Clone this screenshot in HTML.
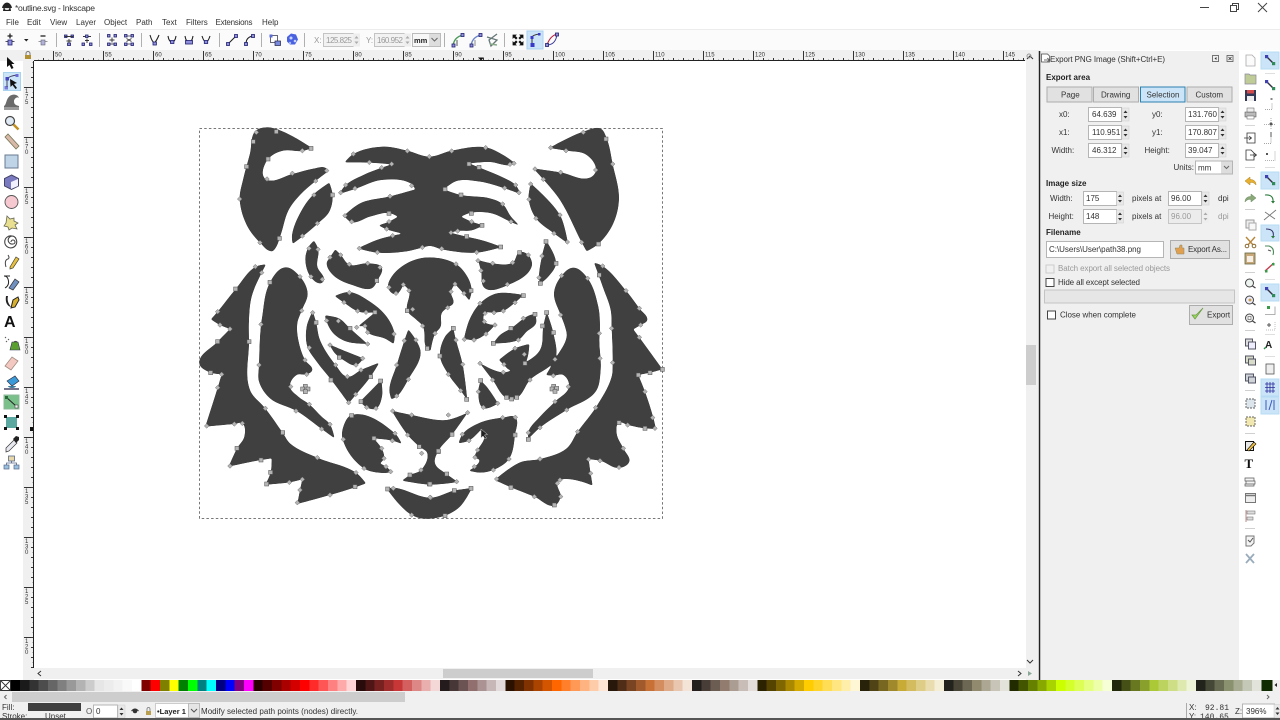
<!DOCTYPE html>
<html><head><meta charset="utf-8"><title>outline.svg - Inkscape</title>
<style>
html,body{margin:0;padding:0;background:#fff;width:1280px;height:720px;overflow:hidden}
svg{position:absolute;left:0;top:0;display:block;filter:blur(.3px)}
text{font-family:"Liberation Sans",sans-serif;font-size:8px;fill:#333}
.b{font-weight:bold;fill:#222}
.g{fill:#999}
.m{font-family:"Liberation Mono",monospace;font-size:8px}
.r{font-size:6px;fill:#333}
.mk{fill:none;stroke:none}
.d{marker:url(#d)}
.s{marker:url(#s)}
.i{fill:#fff;stroke:#b5b5b5;stroke-width:1}
.btn{fill:#e1e1e1;stroke:#adadad;stroke-width:1}
.n{fill:#8f8fdc;stroke:#1f1f70;stroke-width:.8}
.l{fill:none;stroke:#222;stroke-width:1.1}
.sep{stroke:#b0b0b0;stroke-width:1}
</style></head><body>
<svg width="1280" height="720" viewBox="0 0 1280 720" xmlns="http://www.w3.org/2000/svg">
<defs>
<marker id="d" markerUnits="userSpaceOnUse" markerWidth="18" markerHeight="18" refX="9" refY="9" overflow="visible"><path d="M9 2l7 7-7 7-7-7z" fill="#b4b4b4" stroke="#707070" stroke-width="1.5"/></marker>
<marker id="s" markerUnits="userSpaceOnUse" markerWidth="18" markerHeight="18" refX="9" refY="9" overflow="visible"><path d="M3 3h12v12H3z" fill="#b4b4b4" stroke="#505050" stroke-width="1.6"/></marker>
<filter id="goo" filterUnits="userSpaceOnUse" x="-20" y="-20" width="1500" height="1300"><feGaussianBlur stdDeviation="2"/><feComponentTransfer><feFuncA type="linear" slope="5" intercept="-2"/></feComponentTransfer></filter>
<pattern id="hr" x="3" y="50" width="50" height="11" patternUnits="userSpaceOnUse"><path d="M.5 1v10M10.5 8v3M20.5 8v3M30.5 8v3M40.5 8v3" stroke="#333" stroke-width="1"/><path d="M5.5 9.5v2M15.5 9.5v2M25.5 9.5v2M35.5 9.5v2M45.5 9.5v2" stroke="#666" stroke-width=".8"/></pattern>
<pattern id="vr" x="23" y="37" width="11" height="50" patternUnits="userSpaceOnUse"><path d="M1 .5h10M8 10.5h3M8 20.5h3M8 30.5h3M8 40.5h3" stroke="#333" stroke-width="1"/><path d="M9.5 5.5h2M9.5 15.5h2M9.5 25.5h2M9.5 35.5h2M9.5 45.5h2" stroke="#666" stroke-width=".8"/></pattern>
<g id="sp"><rect width="7" height="13" fill="#e8e8e8" stroke="#ccc" stroke-width=".5"/><path d="M3.5 2.5l2 2.5h-4zM3.5 10.5l2-2.5h-4z" fill="#333"/></g>
<g id="spg"><rect width="7" height="13" fill="#eee"/><path d="M3.5 2.5l2 2.5h-4zM3.5 10.5l2-2.5h-4z" fill="#aaa"/></g>
<g id="snap"><path d="M-3-3 3 3" stroke="#334" stroke-width="1.400"/><rect x="-5" y="-5" width="3.200" height="3.200" fill="#4040b0"/><rect x="2" y="2" width="3.200" height="3.200" fill="#308a5a"/></g>
</defs>

<!-- window -->
<rect width="1280" height="720" fill="#fff"/>
<rect y="29" width="1280" height="21" fill="#fbfbfb"/>
<path d="M0 29.5h1280" stroke="#ececec"/>

<!-- title bar -->
<path d="M2 8Q3 3 7 2.500 11 3 12 8L10.500 8 11 11H3L3.500 8z" fill="#222"/><path d="M4.500 8h5l-1 2h-3z" fill="#ddd"/>
<text x="15" y="11" style="font-size:8.600px" textLength="80">*outline.svg - Inkscape</text>
<path d="M1200 7.500h9" stroke="#444" stroke-width="1"/>
<path d="M1230.500 5.500h6v6h-6zM1232.500 5.500v-2h6v6h-2" fill="none" stroke="#444" stroke-width="1"/>
<path d="M1258 3l9 9M1267 3l-9 9" stroke="#444" stroke-width="1"/>

<!-- menu -->
<g>
<text x="6" y="25">File</text><text x="27" y="25">Edit</text><text x="50" y="25">View</text><text x="76" y="25">Layer</text><text x="104" y="25">Object</text><text x="136" y="25">Path</text><text x="162" y="25">Text</text><text x="186" y="25">Filters</text><text x="215.500" y="25" textLength="37">Extensions</text><text x="262" y="25">Help</text>
</g>

<!-- top toolbar -->
<g>
<path d="M10 33.500v5M7.500 36h5" stroke="#222" stroke-width="1.300"/><path d="M5.500 41.500h9" stroke="#555"/><rect x="8" y="40" width="4" height="5" class="n"/>
<path d="M24 39h4.500l-2.200 2.500z" fill="#222"/>
<path d="M40.500 36h5" stroke="#222" stroke-width="1.300"/><path d="M38.500 41.500h9" stroke="#999"/><rect x="41" y="40" width="4" height="5" fill="#b0b0d8" stroke="#667" stroke-width=".6"/>
<path class="sep" d="M56.500 33v14"/>
<rect x="64.500" y="35" width="2.500" height="2.500" class="n"/><rect x="71" y="35" width="2.500" height="2.500" class="n"/><path d="M65 36.500h8M69 39v4M66.500 41h5" stroke="#333" stroke-width=".9"/><rect x="67.500" y="43" width="3" height="2.500" class="n"/>
<path d="M83 36.500h8M87 38.500v4.500M85 40.500h4" stroke="#333" stroke-width=".9"/><rect x="85.500" y="35" width="2.500" height="2.500" class="n"/><rect x="82" y="43" width="2.500" height="2.500" class="n"/><rect x="89.500" y="43" width="2.500" height="2.500" class="n"/>
<path class="sep" d="M99.500 33v14"/>
<rect x="107.500" y="34.500" width="2.500" height="2.500" class="n"/><rect x="114" y="34.500" width="2.500" height="2.500" class="n"/><path d="M112 37.500v5M109.500 40h5" stroke="#333" stroke-width=".9"/><path d="M108 44h8" stroke="#333" stroke-width=".9"/><rect x="107.500" y="43" width="2.500" height="2.500" class="n"/><rect x="114" y="43" width="2.500" height="2.500" class="n"/>
<rect x="124.500" y="34.500" width="2.500" height="2.500" class="n"/><rect x="131" y="34.500" width="2.500" height="2.500" class="n"/><path d="M127 36h4M127 44h4M126.500 38.500l5 3M131.500 38.500l-5 3" stroke="#333" stroke-width=".8"/><rect x="124.500" y="43" width="2.500" height="2.500" class="n"/><rect x="131" y="43" width="2.500" height="2.500" class="n"/>
<path class="sep" d="M141.500 33v14"/>
<path d="M150 35Q152 42 154.500 43 157 40 159 35" class="l" stroke-width=".9"/><rect x="153" y="42" width="3.400" height="3" class="n"/>
<path d="M168 36Q169 42 172 42 175 42 176 36" class="l" stroke-width=".9"/><rect x="170.500" y="40.500" width="3.400" height="3" class="n"/>
<path d="M185 36Q186 42 189 42 192 42 193 36" class="l" stroke-width=".9"/><rect x="185.500" y="40.500" width="7" height="3.500" class="n"/>
<path d="M202 36Q204 42 206 42 208 42 210 36" class="l" stroke-width=".9"/><rect x="204.300" y="40.500" width="3.400" height="3" class="n"/>
<path class="sep" d="M219.500 33v14"/>
<path d="M228 44 236 36" stroke="#222" stroke-width="1.100"/><rect x="226.500" y="42.500" width="3" height="3" class="n"/><rect x="234.500" y="34.500" width="3" height="3" class="n"/>
<path d="M246 44Q246 37 253 36" class="l"/><rect x="244.500" y="42.500" width="3" height="3" class="n"/><rect x="251.500" y="34.500" width="3" height="3" class="n"/>
<path class="sep" d="M261.500 33v14"/>
<rect x="270.500" y="35.500" width="7" height="7" fill="#fff" stroke="#667"/><rect x="269.500" y="34.500" width="3" height="3" fill="#5a6ad8"/><rect x="275" y="41" width="5.500" height="4.500" fill="#7a8ae0" stroke="#224" stroke-width=".7"/>
<path d="M287 37l4-3.500 5 1 2 5-3 5-5 0-3-3z" fill="#4a62e0"/><circle cx="291" cy="38" r="1.500" fill="#c8d4ff"/><circle cx="295" cy="41" r="1.300" fill="#c8d4ff"/><circle cx="290" cy="43" r="1.200" fill="#a8b8ff"/>
<path class="sep" d="M304.500 33v14"/>
<text x="314" y="43" class="g">X:</text>
<rect x="323.500" y="33.500" width="30" height="13" fill="#f2f2f2" stroke="#c4c4c4"/><text x="326" y="43" class="g" textLength="26">125.825</text><use href="#spg" x="353" y="33.500"/>
<text x="366" y="43" class="g">Y:</text>
<rect x="374.500" y="33.500" width="30" height="13" fill="#f2f2f2" stroke="#c4c4c4"/><text x="377" y="43" class="g" textLength="26">160.952</text><use href="#spg" x="404" y="33.500"/>
<rect x="412.500" y="33.500" width="28" height="13" fill="#f7f7f7" stroke="#bbb"/><rect x="429" y="34" width="11" height="12" fill="#ddd"/><path d="M431.500 38l3 3 3-3" fill="none" stroke="#666"/><text x="414" y="43" class="b" style="font-size:7.500px">mm</text>
<path class="sep" d="M444.500 33v14"/>
<path d="M453 46Q454 37 463 35" fill="none" stroke="#4a9a58" stroke-width="1.400"/><path d="M457 46v-6" stroke="#555"/><rect x="452" y="44" width="3" height="3" class="n"/><rect x="461" y="33.500" width="3" height="3" class="n"/>
<path d="M471 46Q472 37 481 35" fill="none" stroke="#6a86c8" stroke-width="1.400"/><path d="M475 46v-6" stroke="#888"/><rect x="470" y="44" width="3" height="3" class="n"/><rect x="479" y="33.500" width="3" height="3" class="n"/>
<path d="M487 37l10 3-6 6-2-6 8-6" fill="none" stroke="#677" stroke-width="1.300"/><path d="M490 44l7 1" stroke="#8a8" stroke-width="1.500"/>
<path class="sep" d="M504.500 33v14"/>
<path d="M513 35h3l-1 1 2 2-1 1-2-2-1 1zM523 35h-3l1 1-2 2 1 1 2-2 1 1zM513 45h3l-1-1 2-2-1-1-2 2-1-1zM523 45h-3l1-1-2-2 1-1 2 2 1-1z" fill="#111" stroke="#111" stroke-width=".8"/>
<rect x="527" y="31" width="16" height="18" fill="#cce4f7" stroke="#a9d2ef"/>
<path d="M532 43V37Q533 35 539 34" fill="none" stroke="#333"/><rect x="530.500" y="36" width="3" height="3" fill="#3a3ac8"/><rect x="530.500" y="43" width="4" height="4" fill="#3a3ac8"/><rect x="538" y="33" width="2.500" height="2.500" fill="#3a3ac8"/>
<path d="M547 45Q550 36 557 34" fill="none" stroke="#c02040" stroke-width="1.100"/><path d="M548 45Q556 44 557 34" fill="none" stroke="#3a3a9a" stroke-width="1"/><rect x="545.500" y="43.500" width="3" height="3" class="n"/><rect x="555.500" y="33" width="3" height="3" class="n"/>
</g>

<!-- rulers -->
<rect x="0" y="50" width="1040" height="11" fill="#f0f0f0"/>
<rect x="23" y="50" width="11" height="630" fill="#f0f0f0"/>
<rect x="34" y="50" width="990" height="11" fill="url(#hr)"/>
<rect x="23" y="62" width="11" height="606" fill="url(#vr)"/>
<path d="M34 60.500h991" stroke="#222" stroke-width="1"/>
<path d="M33.500 61v607" stroke="#222" stroke-width="1"/>
<path d="M26 55v-1.500a2 2 0 0 1 4 0V55" fill="none" stroke="#777"/><rect x="25" y="55" width="6" height="4" fill="#b09030"/>
<g class="r">
<text x="55" y="56.500" class="r">50</text><text x="105" y="56.500" class="r">55</text><text x="155" y="56.500" class="r">60</text><text x="205" y="56.500" class="r">65</text><text x="255" y="56.500" class="r">70</text><text x="305" y="56.500" class="r">75</text><text x="355" y="56.500" class="r">80</text><text x="405" y="56.500" class="r">85</text><text x="455" y="56.500" class="r">90</text><text x="505" y="56.500" class="r">95</text><text x="555" y="56.500" class="r">100</text><text x="605" y="56.500" class="r">105</text><text x="655" y="56.500" class="r">110</text><text x="705" y="56.500" class="r">115</text><text x="755" y="56.500" class="r">120</text><text x="805" y="56.500" class="r">125</text><text x="855" y="56.500" class="r">130</text><text x="905" y="56.500" class="r">135</text><text x="955" y="56.500" class="r">140</text><text x="1005" y="56.500" class="r">145</text>
</g>
<path d="M478 57.500h6l-3 3z" fill="#111"/>
<g>
<text x="25" y="93" class="r">1</text><text x="25" y="98.500" class="r">7</text><text x="25" y="104" class="r">5</text>
<text x="25" y="143" class="r">1</text><text x="25" y="148.500" class="r">7</text><text x="25" y="154" class="r">0</text>
<text x="25" y="193" class="r">1</text><text x="25" y="198.500" class="r">6</text><text x="25" y="204" class="r">5</text>
<text x="25" y="243" class="r">1</text><text x="25" y="248.500" class="r">6</text><text x="25" y="254" class="r">0</text>
<text x="25" y="293" class="r">1</text><text x="25" y="298.500" class="r">5</text><text x="25" y="304" class="r">5</text>
<text x="25" y="343" class="r">1</text><text x="25" y="348.500" class="r">5</text><text x="25" y="354" class="r">0</text>
<text x="25" y="393" class="r">1</text><text x="25" y="398.500" class="r">4</text><text x="25" y="404" class="r">5</text>
<text x="25" y="443" class="r">1</text><text x="25" y="448.500" class="r">4</text><text x="25" y="454" class="r">0</text>
<text x="25" y="493" class="r">1</text><text x="25" y="498.500" class="r">3</text><text x="25" y="504" class="r">5</text>
<text x="25" y="543" class="r">1</text><text x="25" y="548.500" class="r">3</text><text x="25" y="554" class="r">0</text>
<text x="25" y="593" class="r">1</text><text x="25" y="598.500" class="r">2</text><text x="25" y="604" class="r">5</text>
<text x="25" y="643" class="r">1</text><text x="25" y="648.500" class="r">2</text><text x="25" y="654" class="r">0</text>
</g>
<path d="M30 427h3v4h-3z" fill="#111"/>

<!-- left toolbar -->
<g>
<path d="M7 57l0 10 2.500-2 2 4 2-1-2-4h3z" fill="#111"/>
<rect x="3.500" y="72.500" width="17" height="18" fill="#cce4f7" stroke="#a9d2ef"/>
<path d="M7 79Q9 76 17 75" fill="none" stroke="#446"/><rect x="5.500" y="77" width="3.500" height="3.500" fill="#4444c0"/><rect x="15.500" y="74" width="3" height="3" fill="#6a6ad8"/><rect x="4.500" y="86" width="3.500" height="3.500" fill="#7a7ad8"/><path d="M7 80v7" stroke="#446"/><path d="M10 79l7 4-3 1 3 4-1.500 1-3-4-2 2z" fill="#111"/>
<path d="M4 107h15v-1C15 105 14 104 14 101 14 99 17 96 19 98 18 94 11 93 8 98 6 101 6 105 4 106z" fill="#6a6a6a"/><path d="M4 107h15v3H4z" fill="#9a9a9a"/>
<circle cx="10" cy="121" r="4.500" fill="#dfeaf5" stroke="#444" stroke-width="1.200"/><path d="M13.500 124.500l5 5" stroke="#c09020" stroke-width="2.500"/>
<path d="M5 137l3-3 11 12-3 3z" fill="#d8b8a8" stroke="#775" stroke-width=".8"/>
<rect x="5" y="155" width="13" height="13" fill="#c0d4e8" stroke="#6a7a90"/>
<path d="M11.500 175l7 3.500v7.500l-7 3.500-7-3.500v-7.500z" fill="#7a7ac0" stroke="#446"/><path d="M11 182l7-3v7l-7 3z" fill="#f0f0ff"/>
<circle cx="11.500" cy="202" r="6.500" fill="#f6c8d0" stroke="#555" stroke-width=".9"/>
<path d="M7 216l3 3 4-1 0 3 4 2-3 2 2 4-5-1-3 2-1-3-4-1 2-3z" fill="#e8e090" stroke="#665" stroke-width=".8"/>
<path d="M11 242a2 2 0 1 1 2 2 4 4 0 1 1 3-5 6 6 0 1 1-4-3" fill="none" stroke="#444" stroke-width="1.100"/>
<path d="M6 267Q4 260 8 259 10 258 8 255" fill="none" stroke="#444"/><path d="M10 267l6-10 3 2-6 9-3 1z" fill="#e8c040" stroke="#443" stroke-width=".7"/>
<path d="M5 288Q10 285 8 279 7 276 4 276h6" fill="none" stroke="#222"/><path d="M9 288l6-9 4 3-6 8z" fill="#7090c0" stroke="#333" stroke-width=".7"/>
<path d="M6 296C5 302 7 306 11 307 8 303 7 300 8 296z" fill="#222"/><path d="M11 308l2-8 5-3 1 3-4 7z" fill="#d8b030" stroke="#222" stroke-width="1"/>
<text x="4" y="327" style="font-family:'Liberation Sans';font-weight:bold;font-size:16px;fill:#111">A</text>
<path d="M12 342h6l2 8h-10z" fill="#5aa030" stroke="#335" stroke-width=".6"/><path d="M14 342a2 2 0 0 1 3 0" fill="none" stroke="#444"/><path d="M5 337l1 1M8 339l1 1M6 341l1 1" stroke="#555"/>
<path d="M5 366l7-9 6 4-7 9z" fill="#f2c8c0" stroke="#a08a80" stroke-width=".8"/>
<path d="M7 381l8-5 4 5-7 5z" fill="#3a9ad8" stroke="#334" stroke-width=".7"/><path d="M4 389h15" stroke="#446" stroke-width="1.500"/><path d="M8 386a4 2 0 0 0 8 0" fill="#3a7a9a"/>
<rect x="4" y="395" width="15" height="14" fill="#7ac08a" stroke="#8cb898"/><path d="M6 397l10 9" stroke="#222"/><rect x="5" y="396" width="3" height="3" fill="#2a6a3a"/><rect x="15" y="405" width="3" height="3" fill="#eee" stroke="#333" stroke-width=".5"/>
<rect x="6" y="417" width="11" height="11" fill="#5aa8a0"/><g fill="#111"><rect x="4" y="415" width="3" height="3"/><rect x="16" y="415" width="3" height="3"/><rect x="4" y="427" width="3" height="3"/><rect x="16" y="427" width="3" height="3"/></g>
<path d="M6 448l8-8 3 3-8 8-3 1z" fill="#e8e8f0" stroke="#333" stroke-width=".7"/><path d="M13 439l3-3 3 1 0 3-3 3z" fill="#222"/>
<rect x="8.500" y="456" width="6" height="5" fill="#e8d8a8" stroke="#568" stroke-width=".8"/><rect x="4" y="465" width="5" height="4" fill="#9ac0e0" stroke="#568" stroke-width=".7"/><rect x="14" y="465" width="5" height="4" fill="#9ac0e0" stroke="#568" stroke-width=".7"/><path d="M11.500 461v2M6.500 465v-2h10v2" fill="none" stroke="#568" stroke-width=".8"/>
</g>

<!-- canvas: selection box + tiger -->
<rect x="199.500" y="128.500" width="463" height="390" fill="none" stroke="#777" stroke-width="1" stroke-dasharray="2.500 2.200"/>
<g transform="translate(190,120) scale(.33333)">
<g id="tg" fill="#3f3f3f" filter="url(#goo)">
<!-- left ear -->
<path d="M196 33 228 22 262 28 310 50 366 84 337 93 280 92 244 108 226 130 219 165 231 180 307 162 370 146 404 142 416 153 377 183 330 225 296 270 272 345 256 385 245 394 210 368 170 315 149 237 160 175 180 100z"/>
<!-- forehead -->
<path d="M464 127 490 102 580 80 652 92 718 110 785 92 887 82 940 105 976 130 960 136 900 126 837 130 867 142 945 175 977 195 992 222 944 205 870 185 800 183 762 208 813 225 900 235 938 252 963 290 990 318 963 306 905 280 844 278 813 290 845 305 880 316 845 331 803 333 780 338 830 350 880 362 936 381 860 398 755 388 720 378 697 383 650 394 562 398 504 385 560 360 608 347 640 341 590 328 566 316 597 305 624 290 597 279 540 290 485 307 462 287 510 250 600 229 676 208 662 190 575 180 495 207 448 222 467 195 520 165 575 143 605 133 538 128z"/>
<!-- stripe right of left ear -->
<path d="M418 188 428 225 418 275 382 312 337 350 308 372 306 345 340 262 372 222z"/>
<path d="M372 362 385 388 382 440 402 480 392 490 363 472 346 420 355 382z"/>
<path d="M420 412 436 388 452 404 478 434 533 430 575 442 562 482 545 505 490 496 430 466 410 430z"/>
<!-- dome + nose stalk -->
<path d="M595 505 605 470 660 425 720 412 798 432 835 475 845 512 838 542 822 522 795 492 783 515 790 550 772 563 755 580 752 620 735 642 722 692 712 688 698 618 680 600 652 572 657 512 640 494 618 523z"/>
<!-- lid arc left -->
<path d="M434 528 478 516 540 545 590 590 614 642 611 672 585 656 533 637 525 620 503 620 555 577 528 578 503 574 462 548z"/>
<path d="M408 600 405 586 447 595 480 625 533 672 470 665 430 640z"/>
<!-- V left -->
<path d="M368 573 378 605 390 660 437 735 472 770 513 750 568 728 542 770 497 825 476 850 424 780 380 725 352 680 350 620z"/>
<path d="M418 673 470 695 520 715 498 736 460 720 435 700z"/>
<path d="M574 780 576 830 558 866 530 862 510 845z"/>
<path d="M655 628 678 660 692 700 655 778 622 828 604 838 598 810 620 735 643 662z"/>
<!-- outer mane left -->
<path d="M228 433 215 458 185 530 177 600 177 665 180 810 226 865 278 938 300 970 382 1013 498 1058 528 1090 495 1102 420 1125 322 1152 330 1110 337 1078 298 1087 226 1094 242 1057 245 1015 213 1020 116 1040 141 985 163 950 157 910 133 912 46 920 83 803 95 763 62 758 28 730 83 665 120 627 90 615 63 598 83 575 137 507 197 440z"/>
<!-- left cheek -->
<path d="M215 600 240 487 285 442 330 470 353 520 335 572 322 610 325 660 345 720 367 750 350 763 320 765 300 800 325 830 358 853 395 890 420 913 434 955 395 927 320 873 240 835 207 785 207 735 213 613z"/>
<!-- left fang -->
<path d="M485 885 460 920 458 958 522 1045 580 1059 606 1056 588 1040 570 1030 582 1015 575 985 550 955 607 962 636 972 615 940z"/>
<!-- snout T -->
<path d="M605 872 665 885 770 900 833 878 787 943 745 993 735 1030 770 1062 804 1086 720 1094 636 1082 660 1065 693 1050 712 1000 688 980 653 945z"/>
<!-- chin -->
<path d="M590 1106 610 1103 722 1133 792 1112 846 1104 810 1160 765 1187 700 1196 665 1185 625 1150z"/>
<!-- right ear -->
<path d="M1078 84 1180 35 1232 26 1250 55 1268 132 1287 235 1270 310 1225 372 1190 394 1175 367 1110 240 1060 178 1030 145 1112 157 1200 173 1218 150 1190 105 1128 92z"/>
<path d="M1022 190 1110 285 1134 370 1092 340 1038 295 1016 238z"/>
<path d="M1068 362 1098 430 1075 470 1050 492 1047 473 1056 408z"/>
<path d="M864 420 908 430 968 428 989 396 1015 405 1025 440 952 496 885 505 873 452z"/>
<!-- right lid arc -->
<path d="M1000 525 920 520 870 550 838 600 822 656 852 660 888 642 915 615 883 605 885 580 912 578 940 573 975 548z"/>
<path d="M910 670 930 645 963 625 1020 585 1036 583 1038 610 1010 635 985 660z"/>
<!-- V right -->
<path d="M1070 576 1090 638 1095 718 1020 780 980 834 950 834 908 780 868 728 940 757 1005 728 1050 690 1060 618z"/>
<path d="M927 720 975 685 1018 672 1005 730 960 750 942 735z"/>
<path d="M790 625 798 660 818 733 832 840 812 812 775 763 750 708 765 650z"/>
<path d="M872 782 890 800 924 850 880 864 865 815z"/>
<!-- right mane -->
<path d="M1212 428 1238 438 1308 512 1348 565 1372 600 1352 615 1330 628 1348 652 1418 748 1380 758 1345 765 1365 815 1390 893 1398 927 1365 925 1313 915 1287 908 1280 940 1300 985 1318 1025 1287 1044 1230 1022 1196 1018 1202 1060 1208 1097 1110 1080 1102 1090 1112 1130 1093 1157 1033 1130 963 1102 914 1080 990 1027 1050 1017 1130 985 1163 935 1217 863 1265 770 1268 728 1265 625 1262 570 1240 505z"/>
<!-- right cheek -->
<path d="M1092 520 1115 467 1150 443 1193 475 1225 560 1230 620 1228 660 1232 750 1217 815 1130 870 1050 923 1015 957 1015 935 1050 890 1095 845 1137 800 1120 765 1090 767 1068 765 1095 718 1130 650 1125 620 1112 585z"/>
<!-- right fang -->
<path d="M938 893 976 892 975 945 957 1017 910 1050 870 1058 836 1052 855 1040 868 1020 855 1012 863 990 883 950 872 930 837 962 806 970 817 943 870 908z"/>
</g>
<!-- nodes -->
<path class="mk s" d="M259 35 190 65 363 85 234 117 170 140 427 225 268 355 137 507 240 487 597 280 560 482 555 577 652 572"/>
<path class="mk d" d="M199 37 337 92 231 177 307 160 410 152 377 183 149 237 372 225 382 310 337 348 210 368 490 102 652 93 718 110 538 127 575 143 605 132 467 195 452 218 495 205 665 197 600 229 465 287 485 305 597 305 590 327 608 347 508 385 562 397 697 382 357 385 384 388 420 412 452 405 478 433 533 430 570 442 363 470 397 478 196 440 215 458 330 470 597 502 618 520 640 494 657 512 668 568 478 518 462 547 503 573 528 577 335 572 83 575 368 578"/>
<g transform="translate(720,0)">
<path class="mk s" d="M117 132 147 142 45 208 93 225 124 280 156 316 110 350 212 381 269 398 123 512 280 527 348 365 378 430 331 490 528 57 505 372 508 465 315 583 350 578"/>
<path class="mk d" d="M65 93 167 83 240 133 252 130 257 195 224 204 267 218 218 252 243 305 125 305 83 333 63 338 35 386 140 397 144 422 188 430 248 428 295 405 153 452 160 483 232 493 78 432 75 492 63 515 102 520 53 563 150 550 255 548 220 573 192 578 165 580 460 37 362 83 408 92 548 132 392 157 497 150 315 147 340 178 302 192 297 238 318 295 390 285 372 340 412 366 455 367 336 408 327 473 395 467 473 475 518 438 588 512 628 565 392 585 280 595"/>
</g>
<g transform="translate(0,600)">
<path class="mk s" d="M83 65 177 65 62 158 141 385 213 420 242 457 230 492 278 338 378 8 423 180 448 112 542 170 572 183 513 245 485 287 552 355 495 500 593 507 660 465 688 380 718 492 480 25 712 85 745 395"/>
<path class="mk d" d="M90 15 120 27 213 13 207 135 95 163 83 203 50 318 133 312 157 310 120 438 298 487 337 478 330 510 322 548 420 525 498 458 382 413 226 265 318 273 302 200 350 163 345 120 358 83 358 253 395 327 420 313 437 135 472 170 513 150 476 248 497 223 420 75 518 115 498 135 530 262 558 265 460 358 522 445 602 455 588 440 582 415 575 385 607 362 615 340 608 273 665 285 653 345 695 400 693 450 610 505 722 533 665 585 612 42 533 72 533 37 525 18 500 22 410 2 620 135 655 178 620 228 643 62 678 60 698 18 735 40 445 3"/>
<path class="mk s" d="M346 199 338 207 354 207 346 215"/>
</g>
<g transform="translate(720,600)">
<path class="mk s" d="M70 25 30 108 110 238 152 182 243 25 190 70 338 18 370 38 285 130 230 232 245 237 260 232 66 343 25 393 255 345 295 358 625 165 660 158 697 148 645 325 567 308 243 502 373 555 123 505 73 512 50 462 0 492 45 587"/>
<path class="mk d" d="M15 40 78 60 98 133 55 163 92 212 163 5 195 15 168 42 132 60 103 58 265 60 255 85 283 103 222 133 150 130 220 157 188 180 300 180 145 215 160 262 203 250 375 118 370 167 415 200 375 245 410 270 330 323 295 338 508 40 510 115 545 25 548 128 497 263 443 335 330 417 632 15 628 52 645 215 668 293 675 325 593 315 580 385 567 442 510 422 476 418 482 460 390 480 382 490 392 530 313 530 200 477 218 293 256 292 97 343 117 362 143 390 135 412 133 440 190 450 237 417 113 278 55 285 80 485 0 532"/>
<path class="mk s" d="M371 199 366 207 380 205 375 214"/>
</g>
</g>
<!-- mouse cursor -->
<path d="M481 429l0 9 2-2 2 3 1.500-1-2-3 3-.5z" fill="#222" stroke="#ddd" stroke-width=".5"/>

<!-- scrollbars -->
<rect x="1026" y="50" width="12" height="630" fill="#f0f0f0"/>
<rect x="1026" y="345" width="10" height="40" fill="#cdcdcd"/>
<path d="M1027 59l3-3 3 3M1027 660l3 3 3-3" fill="none" stroke="#333" stroke-width="1"/>
<circle cx="1029" cy="56" r="2" fill="none" stroke="#999"/>
<rect x="34" y="668" width="992" height="11" fill="#f0f0f0"/>
<rect x="443" y="669" width="150" height="9" fill="#cdcdcd"/>
<path d="M41 671l-3 2.500 3 2.500M1018 671l3 2.500-3 2.500" fill="none" stroke="#333" stroke-width="1"/>
<path d="M1028 671v5l4-2.500z" fill="#8aa898"/>

<!-- export dialog -->
<rect x="1039" y="51" width="200" height="629" fill="#f0f0f0"/>
<path d="M1039.500 51v629" stroke="#222" stroke-width="1.500"/>
<path d="M1041.500 54h6l2 2v6h-8zM1047 58l3 2-3 2M1044 60h5" fill="#fff" stroke="#444" stroke-width=".7"/>
<text x="1050" y="62" textLength="115">Export PNG Image (Shift+Ctrl+E)</text>
<rect x="1212.500" y="55.500" width="6" height="6" fill="none" stroke="#555" stroke-width=".8"/><path d="M1216.500 57l-2 1.500 2 1.500z" fill="#333"/>
<rect x="1227" y="55.500" width="6" height="6" fill="none" stroke="#555" stroke-width=".8"/><path d="M1228.500 57l3 3M1231.500 57l-3 3" stroke="#333" stroke-width=".8"/>
<text x="1046" y="80" class="b">Export area</text>
<rect x="1047" y="87" width="45" height="15" class="btn"/><rect x="1093.500" y="87" width="45" height="15" class="btn"/><rect x="1140.500" y="87" width="44.500" height="15" fill="#cce4f7" stroke="#2d7fb0"/><rect x="1187" y="87" width="45" height="15" class="btn"/>
<text x="1061" y="97.500">Page</text><text x="1101" y="97.500">Drawing</text><text x="1146.500" y="97.500">Selection</text><text x="1195.500" y="97.500">Custom</text>
<g>
<text x="1059" y="117">x0:</text><text x="1059" y="135">x1:</text><text x="1051.500" y="153">Width:</text>
<text x="1152" y="117">y0:</text><text x="1152" y="135">y1:</text><text x="1144.500" y="153">Height:</text>
<rect x="1088.500" y="107.500" width="33" height="14" class="i"/><rect x="1088.500" y="125.500" width="33" height="14" class="i"/><rect x="1088.500" y="143.500" width="33" height="14" class="i"/>
<rect x="1185.500" y="107.500" width="33" height="14" class="i"/><rect x="1185.500" y="125.500" width="33" height="14" class="i"/><rect x="1185.500" y="143.500" width="33" height="14" class="i"/>
<text x="1092" y="117">64.639</text><text x="1092" y="135">110.951</text><text x="1092" y="153">46.312</text>
<text x="1188" y="117">131.760</text><text x="1188" y="135">170.807</text><text x="1188" y="153">39.047</text>
<use href="#sp" x="1122" y="108"/><use href="#sp" x="1122" y="126"/><use href="#sp" x="1122" y="144"/>
<use href="#sp" x="1219" y="108"/><use href="#sp" x="1219" y="126"/><use href="#sp" x="1219" y="144"/>
</g>
<text x="1173.500" y="170">Units:</text>
<rect x="1195.500" y="161" width="37" height="13" class="i"/><rect x="1221" y="161.500" width="11" height="12" fill="#ddd"/><path d="M1224 166l2.500 2.500 2.500-2.500" fill="none" stroke="#666"/><text x="1198" y="170.500">mm</text>
<text x="1046" y="186" class="b">Image size</text>
<text x="1050" y="201">Width:</text><text x="1048.500" y="219">Height:</text>
<rect x="1083.500" y="191.500" width="33" height="14" class="i"/><rect x="1083.500" y="209.500" width="33" height="14" class="i"/>
<text x="1086" y="201">175</text><text x="1086" y="219">148</text>
<use href="#sp" x="1116.500" y="192"/><use href="#sp" x="1116.500" y="210"/>
<text x="1132" y="201">pixels at</text><text x="1132" y="219">pixels at</text>
<rect x="1168.500" y="191.500" width="33" height="14" class="i"/><rect x="1168.500" y="209.500" width="33" height="14" fill="#ececec" stroke="#c6c6c6"/>
<text x="1171" y="201">96.00</text><text x="1171" y="219" class="g">96.00</text>
<use href="#sp" x="1202" y="192"/><use href="#spg" x="1202" y="210"/>
<text x="1218" y="201">dpi</text><text x="1218" y="219" class="g">dpi</text>
<text x="1046" y="235" class="b">Filename</text>
<rect x="1046.500" y="241.500" width="117" height="16" class="i"/><text x="1049" y="252" textLength="92">C:\Users\User\path38.png</text>
<rect x="1170.500" y="240.500" width="59" height="18" class="btn"/>
<path d="M1175 248h4l1-3 2 0 0 3 2 0 0 6-7 0z" fill="#e0a050" stroke="#886" stroke-width=".5"/>
<text x="1188" y="252" textLength="39">Export As...</text>
<rect x="1046" y="265" width="8" height="8" fill="#f0f0f0" stroke="#ccc"/><text x="1058" y="271" class="g" textLength="112">Batch export all selected objects</text>
<rect x="1046" y="278.500" width="8" height="8" fill="#fff" stroke="#444"/><text x="1058" y="285" textLength="82">Hide all except selected</text>
<rect x="1044.500" y="290" width="190" height="13" fill="#e6e6e6" stroke="#c4c4c4"/>
<rect x="1047.500" y="311" width="8" height="8" fill="#fff" stroke="#444"/><text x="1060" y="317.500" textLength="76">Close when complete</text>
<rect x="1189.500" y="305.500" width="43" height="19" class="btn"/>
<path d="M1192 315l3 4 8-11-7 7z" fill="#9ad860" stroke="#6a9a40" stroke-width=".7"/>
<text x="1207" y="317.500">Export</text>

<!-- right columns -->
<rect x="1240" y="50" width="40" height="630" fill="#fff"/>
<g>
<path d="M1246 55h6l3 3v8h-9z" fill="#fbfbfb" stroke="#aaa" stroke-width=".8"/>
<path d="M1245 74h4l1 1h6v9h-11z" fill="#c0cc98" stroke="#889" stroke-width=".7"/>
<rect x="1245" y="90" width="11" height="11" fill="#333a58"/><rect x="1247" y="90" width="7" height="3.500" fill="#d24a4a"/><rect x="1247" y="96" width="7" height="5" fill="#eee"/>
<path d="M1245 112h11v5h-11z" fill="#bbb" stroke="#555" stroke-width=".6"/><rect x="1247" y="108" width="7" height="4" fill="#eee" stroke="#555" stroke-width=".5"/><rect x="1247" y="116" width="7" height="3" fill="#fff" stroke="#555" stroke-width=".5"/>
<path class="sep" d="M1245 125.500h10" stroke-opacity=".5"/>
<path d="M1247 133h8v10h-8zM1244 138h7M1249 136l2.500 2-2.500 2" fill="#fff" stroke="#333" stroke-width=".8"/>
<path d="M1246 150h5l3 3v7h-8zM1250 155h6M1254 153l2.500 2-2.500 2" fill="#fff" stroke="#333" stroke-width=".8"/>
<path class="sep" d="M1245 167.500h10" stroke-opacity=".6"/>
<path d="M1245 181l5-4v2.500c4 0 6 2 6 5.500-2-2-3-3-6-2.500V185z" fill="#e8b030" stroke="#a88020" stroke-width=".5"/>
<path d="M1256 198l-5-4v2.500c-4 0-6 2-6 5.500 2-2 3-3 6-2.500v2.500z" fill="#8aa878" stroke="#6a8a60" stroke-width=".5"/>
<path class="sep" d="M1245 209.500h10" stroke-opacity=".6"/>
<rect x="1246" y="220" width="8" height="8" fill="#eee" stroke="#999"/><rect x="1249" y="223" width="7" height="7" fill="#f8f8f8" stroke="#aaa"/>
<path d="M1246 237l8 9M1255 237l-8 9" stroke="#b8863c" stroke-width="1.400"/><circle cx="1247" cy="246" r="1.800" fill="#fff" stroke="#8a6a30"/><circle cx="1254" cy="246" r="1.800" fill="#fff" stroke="#8a6a30"/>
<rect x="1245" y="253" width="10" height="11" fill="#c8a878" stroke="#664" stroke-width=".8"/><rect x="1247" y="256" width="6" height="6" fill="#f4f0e8"/>
<path class="sep" d="M1245 272.500h10" stroke-opacity=".6"/>
<circle cx="1249.500" cy="283" r="4" fill="#eef4f0" stroke="#444"/><path d="M1252.500 286l3 2" stroke="#444" stroke-width="1.300"/>
<circle cx="1249.500" cy="300" r="4" fill="#eef" stroke="#444"/><circle cx="1250" cy="300" r="1.500" fill="#c8a050"/><path d="M1252.500 303l3 2" stroke="#444" stroke-width="1.300"/>
<circle cx="1249.500" cy="318" r="4" fill="#f4f4f4" stroke="#444"/><rect x="1248" y="316.500" width="3" height="3" fill="none" stroke="#555" stroke-width=".6"/><path d="M1252.500 321l3 2" stroke="#444" stroke-width="1.300"/>
<path class="sep" d="M1245 330.500h10" stroke-opacity=".6"/>
<rect x="1245.500" y="339" width="7" height="7" fill="#ddd" stroke="#556"/><rect x="1248.500" y="342" width="7" height="7" fill="#eef" stroke="#556"/>
<rect x="1245.500" y="356" width="8" height="7" fill="#d8dcc8" stroke="#556"/><rect x="1248.500" y="359" width="7" height="6" fill="#d8dcc8" stroke="#556"/>
<rect x="1245.500" y="374" width="8" height="7" fill="#cfd4d8" stroke="#556"/><rect x="1248.500" y="377" width="7" height="6" fill="#cfd4d8" stroke="#556"/>
<path class="sep" d="M1245 390.500h10" stroke-opacity=".6"/>
<rect x="1246" y="399" width="9" height="9" fill="#dce4ec" stroke="#333" stroke-width=".7" stroke-dasharray="2 1"/>
<rect x="1246" y="417" width="9" height="9" fill="#f0e8b0" stroke="#333" stroke-width=".7" stroke-dasharray="2 1"/>
<path class="sep" d="M1245 433.500h10" stroke-opacity=".6"/>
<rect x="1245.500" y="441.500" width="8" height="9" fill="#e8e8e8" stroke="#111"/><path d="M1247 450l7-8 2 2-7 7z" fill="#f0c040" stroke="#111" stroke-width=".6"/>
<text x="1244.500" y="468" style="font-family:'Liberation Serif';font-weight:bold;font-size:13px;fill:#111">T</text>
<path d="M1245 478h9v3h-9zM1246 481h9v3h-9zM1245 484h9v2h-9z" fill="#f4f4f4" stroke="#555" stroke-width=".7"/>
<rect x="1245.500" y="493.500" width="10" height="9" fill="#eee" stroke="#777"/><path d="M1245.500 495.500h10" stroke="#777" stroke-width="1.500"/>
<path d="M1246 510v12" stroke="#c08a8a"/><rect x="1247" y="511" width="8" height="3" fill="#ddd" stroke="#777" stroke-width=".6"/><rect x="1247" y="517" width="6" height="3" fill="#ddd" stroke="#777" stroke-width=".6"/>
<path class="sep" d="M1245 528.500h10" stroke-opacity=".6"/>
<path d="M1246 536h8v7l-3 3h-5z" fill="#f4f4f4" stroke="#777"/><path d="M1248 540l2 2 3-4" fill="none" stroke="#555"/>
<path d="M1246 554l8 9M1254 554l-8 9" stroke="#9aacbc" stroke-width="1.800"/>
<!-- snap column -->
<rect x="1261" y="52" width="18" height="17" fill="#cce4f7" stroke="#b6dcf5"/><use href="#snap" x="1270" y="60"/>
<path class="sep" d="M1265 73.500h10" stroke-opacity=".4"/>
<use href="#snap" x="1270" y="85"/>
<path d="M1265 109.500h7v-6" fill="none" stroke="#888" stroke-width=".8" stroke-dasharray="1 1"/><rect x="1270.500" y="98" width="2" height="2" fill="#888"/>
<path d="M1264 124.500h12M1271 118v11" stroke="#999" stroke-width=".8" stroke-dasharray="1 1"/><circle cx="1271" cy="124" r="1.500" fill="#555"/>
<path d="M1264 143.500h7v-8" fill="none" stroke="#888" stroke-width=".8" stroke-dasharray="1 1"/><path d="M1271 132v5" stroke="#555"/>
<path d="M1265 160.500h10v-9" fill="none" stroke="#999" stroke-width=".8" stroke-dasharray="1 1"/><rect x="1266" y="153" width="2" height="2" fill="#555"/>
<path class="sep" d="M1265 167.500h10" stroke-opacity=".4"/>
<rect x="1261" y="172" width="18" height="17" fill="#cce4f7" stroke="#b6dcf5"/><use href="#snap" x="1270" y="180"/>
<path d="M1265 195Q1274 194 1273 203" fill="none" stroke="#2a7a3a" stroke-width="1.100"/><path d="M1271 201l2 2.500 2-2.500z" fill="#2a7a3a"/>
<path d="M1264 220l12-10M1265 212l10 7" stroke="#777" stroke-width=".9"/>
<rect x="1261" y="225" width="18" height="16" fill="#cce4f7" stroke="#b6dcf5"/><path d="M1266 229Q1275 229 1273 237" fill="none" stroke="#336" stroke-width="1"/><path d="M1271 236l2 2.500 2-2.500z" fill="#2a7a3a"/>
<path d="M1265 246h4Q1275 248 1273 255" fill="none" stroke="#4a8a5a" stroke-width="1.100"/><path d="M1268 250l3 1" stroke="#555"/>
<path d="M1265 271l9-8" stroke="#c04050" stroke-width="1.400"/><rect x="1272" y="263" width="2.500" height="2.500" fill="#3a9a4a"/><rect x="1265" y="270" width="2.500" height="2.500" fill="#3a9a4a"/>
<rect x="1261" y="284" width="18" height="17" fill="#cce4f7" stroke="#b6dcf5"/><use href="#snap" x="1270" y="292"/>
<path class="sep" d="M1265 279.500h10" stroke-opacity=".4"/>
<rect x="1267" y="306" width="3" height="3" fill="#3a9a4a"/><path d="M1265 314.500h10v-8" fill="none" stroke="#999" stroke-width=".8"/>
<path d="M1267 325h4M1269 323v4" stroke="#555"/><path d="M1275 322v8h-9" fill="none" stroke="#aaa" stroke-width=".7" stroke-dasharray="1 1"/>
<path class="sep" d="M1265 334.500h10" stroke-opacity=".4"/>
<text x="1265" y="348" style="font-family:'Liberation Sans';font-weight:bold;font-size:10px;fill:#222">A</text><path d="M1264 349l2-2" stroke="#2a8a4a" stroke-width="1.300"/>
<path class="sep" d="M1265 356.500h10" stroke-opacity=".4"/>
<rect x="1266" y="364" width="8" height="10" fill="#eee" stroke="#555" stroke-width=".8"/>
<rect x="1261" y="379" width="18" height="17" fill="#cce4f7" stroke="#b6dcf5"/><path d="M1265 384h10M1265 387.500h10M1265 391h10M1267 382v11M1270 382v11M1273 382v11" stroke="#2a2a9a" stroke-width=".8"/>
<rect x="1261" y="397" width="18" height="17" fill="#cce4f7" stroke="#b6dcf5"/><path d="M1266 400v10M1269 410l3-10M1274 400v10" stroke="#3a5ac0" stroke-width="1"/>
</g>

<!-- palette -->
<rect y="680" width="1280" height="23" fill="#f0f0f0"/>
<g id="palette">
<rect x="0" y="680" width="11" height="11" fill="#fff"/><path d="M.5 680.500h10v10H.5zM.5 680.500l10 10M10.500 680.500l-10 10" fill="none" stroke="#333" stroke-width=".9"/>
<path d="M10.670 680h130.700v11H10.670z" fill="#000"/>
<g shape-rendering="crispEdges">
<rect x="20" y="680" width="9.400" height="11" fill="#1a1a1a"/><rect x="29.300" y="680" width="9.400" height="11" fill="#333"/><rect x="38.700" y="680" width="9.400" height="11" fill="#4d4d4d"/><rect x="48" y="680" width="9.400" height="11" fill="#666"/><rect x="57.300" y="680" width="9.400" height="11" fill="#808080"/><rect x="66.700" y="680" width="9.400" height="11" fill="#999"/><rect x="76" y="680" width="9.400" height="11" fill="#b3b3b3"/><rect x="85.300" y="680" width="9.400" height="11" fill="#ccc"/><rect x="94.700" y="680" width="9.400" height="11" fill="#e6e6e6"/><rect x="104" y="680" width="9.400" height="11" fill="#ececec"/><rect x="113.300" y="680" width="9.400" height="11" fill="#f2f2f2"/><rect x="122.700" y="680" width="9.400" height="11" fill="#f9f9f9"/><rect x="132" y="680" width="9.400" height="11" fill="#fff"/>
<rect x="141.330" y="680" width="9.400" height="11" fill="#800000"/><rect x="150.670" y="680" width="9.400" height="11" fill="#f00"/><rect x="160" y="680" width="9.400" height="11" fill="#808000"/><rect x="169.330" y="680" width="9.400" height="11" fill="#ff0"/><rect x="178.670" y="680" width="9.400" height="11" fill="#008000"/><rect x="188" y="680" width="9.400" height="11" fill="#0f0"/><rect x="197.330" y="680" width="9.400" height="11" fill="#008080"/><rect x="206.670" y="680" width="9.400" height="11" fill="#0ff"/><rect x="216" y="680" width="9.400" height="11" fill="#000080"/><rect x="225.330" y="680" width="9.400" height="11" fill="#00f"/><rect x="234.670" y="680" width="9.400" height="11" fill="#800080"/><rect x="244" y="680" width="9.400" height="11" fill="#f0f"/>
</g>
<g shape-rendering="crispEdges" transform="translate(253.330,680)">
<g><rect x="0" width="9.400" height="11" fill="#2b0000"/><rect x="9.330" width="9.400" height="11" fill="#500"/><rect x="18.670" width="9.400" height="11" fill="#800000"/><rect x="28" width="9.400" height="11" fill="#a00"/><rect x="37.330" width="9.400" height="11" fill="#d40000"/><rect x="46.670" width="9.400" height="11" fill="#f00"/><rect x="56" width="9.400" height="11" fill="#ff2a2a"/><rect x="65.330" width="9.400" height="11" fill="#f55"/><rect x="74.670" width="9.400" height="11" fill="#ff8080"/><rect x="84" width="9.400" height="11" fill="#faa"/><rect x="93.330" width="9.400" height="11" fill="#ffd5d5"/><rect x="102.670" width="9.400" height="11" fill="#280b0b"/><rect x="112" width="9.400" height="11" fill="#501616"/><rect x="121.330" width="9.400" height="11" fill="#782121"/><rect x="130.670" width="9.400" height="11" fill="#a02c2c"/><rect x="140" width="9.400" height="11" fill="#c83737"/><rect x="149.330" width="9.400" height="11" fill="#d35f5f"/><rect x="158.670" width="9.400" height="11" fill="#de8787"/><rect x="168" width="9.400" height="11" fill="#e9afaf"/><rect x="177.330" width="9.400" height="11" fill="#f4d7d7"/><rect x="186.670" width="9.400" height="11" fill="#241c1c"/><rect x="196" width="9.400" height="11" fill="#483737"/><rect x="205.330" width="9.400" height="11" fill="#6c5353"/><rect x="214.670" width="9.400" height="11" fill="#916f6f"/><rect x="224" width="9.400" height="11" fill="#ac9393"/><rect x="233.330" width="9.400" height="11" fill="#c8b7b7"/><rect x="242.670" width="9.400" height="11" fill="#e3dbdb"/></g>
<g transform="translate(252,0)"><rect x="0" width="9.400" height="11" fill="#2b1100"/><rect x="9.330" width="9.400" height="11" fill="#520"/><rect x="18.670" width="9.400" height="11" fill="#803300"/><rect x="28" width="9.400" height="11" fill="#a40"/><rect x="37.330" width="9.400" height="11" fill="#d45500"/><rect x="46.670" width="9.400" height="11" fill="#f60"/><rect x="56" width="9.400" height="11" fill="#ff7f2a"/><rect x="65.330" width="9.400" height="11" fill="#f95"/><rect x="74.670" width="9.400" height="11" fill="#ffb380"/><rect x="84" width="9.400" height="11" fill="#fca"/><rect x="93.330" width="9.400" height="11" fill="#ffe6d5"/><rect x="102.670" width="9.400" height="11" fill="#28170b"/><rect x="112" width="9.400" height="11" fill="#502d16"/><rect x="121.330" width="9.400" height="11" fill="#784421"/><rect x="130.670" width="9.400" height="11" fill="#a05a2c"/><rect x="140" width="9.400" height="11" fill="#c87137"/><rect x="149.330" width="9.400" height="11" fill="#d38d5f"/><rect x="158.670" width="9.400" height="11" fill="#deaa87"/><rect x="168" width="9.400" height="11" fill="#e9c6af"/><rect x="177.330" width="9.400" height="11" fill="#f4e3d7"/><rect x="186.670" width="9.400" height="11" fill="#241f1c"/><rect x="196" width="9.400" height="11" fill="#483e37"/><rect x="205.330" width="9.400" height="11" fill="#6c5d53"/><rect x="214.670" width="9.400" height="11" fill="#917c6f"/><rect x="224" width="9.400" height="11" fill="#ac9d93"/><rect x="233.330" width="9.400" height="11" fill="#c8beb7"/><rect x="242.670" width="9.400" height="11" fill="#e3dedb"/></g>
<g transform="translate(504,0)"><rect x="0" width="9.400" height="11" fill="#2b2200"/><rect x="9.330" width="9.400" height="11" fill="#540"/><rect x="18.670" width="9.400" height="11" fill="#806600"/><rect x="28" width="9.400" height="11" fill="#a80"/><rect x="37.330" width="9.400" height="11" fill="#d4aa00"/><rect x="46.670" width="9.400" height="11" fill="#fc0"/><rect x="56" width="9.400" height="11" fill="#ffd42a"/><rect x="65.330" width="9.400" height="11" fill="#fd5"/><rect x="74.670" width="9.400" height="11" fill="#ffe680"/><rect x="84" width="9.400" height="11" fill="#fea"/><rect x="93.330" width="9.400" height="11" fill="#fff6d5"/><rect x="102.670" width="9.400" height="11" fill="#28220b"/><rect x="112" width="9.400" height="11" fill="#504416"/><rect x="121.330" width="9.400" height="11" fill="#786721"/><rect x="130.670" width="9.400" height="11" fill="#a0892c"/><rect x="140" width="9.400" height="11" fill="#c8ab37"/><rect x="149.330" width="9.400" height="11" fill="#d3bc5f"/><rect x="158.670" width="9.400" height="11" fill="#decd87"/><rect x="168" width="9.400" height="11" fill="#e9ddaf"/><rect x="177.330" width="9.400" height="11" fill="#f4eed7"/><rect x="186.670" width="9.400" height="11" fill="#24221c"/><rect x="196" width="9.400" height="11" fill="#484537"/><rect x="205.330" width="9.400" height="11" fill="#6c6753"/><rect x="214.670" width="9.400" height="11" fill="#918a6f"/><rect x="224" width="9.400" height="11" fill="#aca793"/><rect x="233.330" width="9.400" height="11" fill="#c8c4b7"/><rect x="242.670" width="9.400" height="11" fill="#e3e2db"/></g>
<g transform="translate(756,0)"><rect x="0" width="9.400" height="11" fill="#222b00"/><rect x="9.330" width="9.400" height="11" fill="#450"/><rect x="18.670" width="9.400" height="11" fill="#668000"/><rect x="28" width="9.400" height="11" fill="#8a0"/><rect x="37.330" width="9.400" height="11" fill="#aad400"/><rect x="46.670" width="9.400" height="11" fill="#cf0"/><rect x="56" width="9.400" height="11" fill="#d4ff2a"/><rect x="65.330" width="9.400" height="11" fill="#df5"/><rect x="74.670" width="9.400" height="11" fill="#e5ff80"/><rect x="84" width="9.400" height="11" fill="#efa"/><rect x="93.330" width="9.400" height="11" fill="#f6ffd5"/><rect x="102.670" width="9.400" height="11" fill="#22280b"/><rect x="112" width="9.400" height="11" fill="#445016"/><rect x="121.330" width="9.400" height="11" fill="#677821"/><rect x="130.670" width="9.400" height="11" fill="#89a02c"/><rect x="140" width="9.400" height="11" fill="#abc837"/><rect x="149.330" width="9.400" height="11" fill="#bcd35f"/><rect x="158.670" width="9.400" height="11" fill="#cdde87"/><rect x="168" width="9.400" height="11" fill="#dde9af"/><rect x="177.330" width="9.400" height="11" fill="#eef4d7"/><rect x="186.670" width="9.400" height="11" fill="#22241c"/><rect x="196" width="9.400" height="11" fill="#454837"/><rect x="205.330" width="9.400" height="11" fill="#676c53"/><rect x="214.670" width="9.400" height="11" fill="#8a916f"/><rect x="224" width="9.400" height="11" fill="#a7ac93"/><rect x="233.330" width="9.400" height="11" fill="#c4c8b7"/><rect x="242.670" width="9.400" height="11" fill="#e2e3db"/><rect x="252" width="11" height="11" fill="#112b00"/></g>
</g>
</g>
<path d="M1277 683v4l-2.500-2z" fill="#222"/>
<!-- palette scrollbar -->
<rect x="12" y="692" width="393" height="10" fill="#cdcdcd"/>
<path d="M6.500 695l-2 2 2 2M1267 695l2 2-2 2" fill="none" stroke="#666" stroke-width="1"/>

<!-- status bar -->
<rect y="703" width="1280" height="15" fill="#f0f0f0"/>
<text x="2" y="710">Fill:</text><text x="2" y="719">Stroke:</text>
<rect x="28" y="703" width="53" height="8" fill="#3f3f3f"/>
<text x="45" y="719">Unset</text>
<text x="86" y="714" fill="#555" style="fill:#555">O:</text>
<rect x="93.500" y="705" width="24" height="13" class="i"/><text x="96" y="714">0</text><use href="#sp" x="118" y="705"/>
<circle cx="135" cy="711" r="2.300" fill="#333"/><path d="M131.500 711Q135 707 138.500 711" stroke="#333" fill="none"/>
<rect x="146" y="711" width="5" height="4" fill="#b8a050"/><path d="M147 711v-2a1.500 1.500 0 0 1 3 0v2" fill="none" stroke="#777" stroke-width=".8"/>
<rect x="155.500" y="703.500" width="33" height="14" fill="#fff" stroke="#ccc"/><rect x="188.500" y="703.500" width="11" height="14" fill="#e5e5e5" stroke="#bbb"/><path d="M191 709l3 3 3-3" fill="none" stroke="#555"/>
<text x="157" y="714" class="b" style="font-size:7.500px">•Layer 1</text>
<text x="201" y="714" textLength="157">Modify selected path points (nodes) directly.</text>
<path d="M1186.500 703v15" stroke="#aaa"/>
<text x="1189" y="710">X:</text><text x="1189" y="719">Y:</text>
<text x="1205" y="710" class="m">92.81</text><text x="1200" y="719" class="m">140.65</text>
<text x="1235" y="714">Z:</text>
<rect x="1242.500" y="704" width="32" height="14" class="i"/><text x="1246" y="714">396%</text><use href="#sp" x="1274" y="704.500"/>
<rect y="718" width="1280" height="2" fill="#555"/>
</svg>
<script>
(function(){
var ps=document.querySelectorAll('#tg path');
for(var k=0;k<ps.length;k++){
 var n=ps[k].getAttribute('d').match(/-?[\d.]+/g).map(Number),P=[];
 for(var i=0;i<n.length;i+=2)P.push([n[i],n[i+1]]);
 var L=P.length,D=[];
 for(i=0;i<L;i++){
  var a=P[(i+L-1)%L],b=P[i],c=P[(i+1)%L];
  var ux=b[0]-a[0],uy=b[1]-a[1],vx=c[0]-b[0],vy=c[1]-b[1];
  var lu=Math.hypot(ux,uy)||1,lv=Math.hypot(vx,vy)||1;
  ux/=lu;uy/=lu;vx/=lv;vy/=lv;
  var cs=ux*vx+uy*vy,dx=ux+vx,dy=uy+vy,ld=Math.hypot(dx,dy)||1;
  if(cs<-0.05){D.push([0,0,lu,lv]);}else{D.push([dx/ld,dy/ld,lu,lv]);}
 }
 var s='M'+P[0][0]+' '+P[0][1];
 for(i=0;i<L;i++){
  var j=(i+1)%L,h=D[i][3]/3;
  s+='C'+(P[i][0]+D[i][0]*h).toFixed(1)+' '+(P[i][1]+D[i][1]*h).toFixed(1)+' '+(P[j][0]-D[j][0]*h).toFixed(1)+' '+(P[j][1]-D[j][1]*h).toFixed(1)+' '+P[j][0]+' '+P[j][1];
 }
 ps[k].setAttribute('d',s+'z');
}
})();
</script>
</body></html>
